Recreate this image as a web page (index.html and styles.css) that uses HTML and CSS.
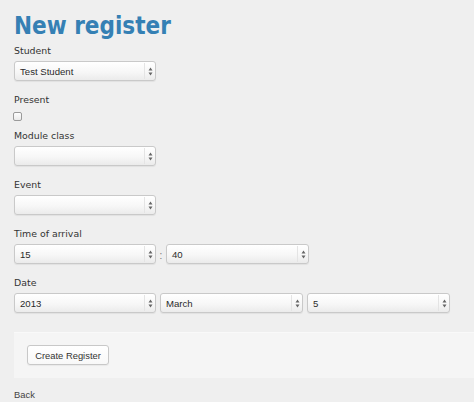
FILE: index.html
```html
<!DOCTYPE html>
<html lang="en">
<head>
<meta charset="utf-8">
<title>New register</title>
<link rel="stylesheet" href="styles.css">
</head>
<body>
<h1 class="title">New register</h1>
<form class="form">
  <div class="field">
    <label class="label">Student</label>
    <div class="select"><span class="select-text">Test Student</span><span class="select-arrow"><svg width="5" height="9" viewBox="0 0 5 9"><path d="M2.5 0.5 L4.5 3.5 L0.5 3.5 Z M2.5 8.5 L4.5 5.5 L0.5 5.5 Z" fill="#666"/></svg></span></div>
  </div>
  <div class="field field-check">
    <label class="label">Present</label>
    <span class="checkbox"></span>
  </div>
  <div class="field">
    <label class="label">Module class</label>
    <div class="select"><span class="select-text"></span><span class="select-arrow"><svg width="5" height="9" viewBox="0 0 5 9"><path d="M2.5 0.5 L4.5 3.5 L0.5 3.5 Z M2.5 8.5 L4.5 5.5 L0.5 5.5 Z" fill="#666"/></svg></span></div>
  </div>
  <div class="field">
    <label class="label">Event</label>
    <div class="select"><span class="select-text"></span><span class="select-arrow"><svg width="5" height="9" viewBox="0 0 5 9"><path d="M2.5 0.5 L4.5 3.5 L0.5 3.5 Z M2.5 8.5 L4.5 5.5 L0.5 5.5 Z" fill="#666"/></svg></span></div>
  </div>
  <div class="field">
    <label class="label">Time of arrival</label>
    <div class="row row-time">
      <div class="select"><span class="select-text">15</span><span class="select-arrow"><svg width="5" height="9" viewBox="0 0 5 9"><path d="M2.5 0.5 L4.5 3.5 L0.5 3.5 Z M2.5 8.5 L4.5 5.5 L0.5 5.5 Z" fill="#666"/></svg></span></div>
      <span class="colon">:</span>
      <div class="select select-wide"><span class="select-text">40</span><span class="select-arrow"><svg width="5" height="9" viewBox="0 0 5 9"><path d="M2.5 0.5 L4.5 3.5 L0.5 3.5 Z M2.5 8.5 L4.5 5.5 L0.5 5.5 Z" fill="#666"/></svg></span></div>
    </div>
  </div>
  <div class="field">
    <label class="label">Date</label>
    <div class="row row-date">
      <div class="select"><span class="select-text">2013</span><span class="select-arrow"><svg width="5" height="9" viewBox="0 0 5 9"><path d="M2.5 0.5 L4.5 3.5 L0.5 3.5 Z M2.5 8.5 L4.5 5.5 L0.5 5.5 Z" fill="#666"/></svg></span></div>
      <div class="select select-wide"><span class="select-text">March</span><span class="select-arrow"><svg width="5" height="9" viewBox="0 0 5 9"><path d="M2.5 0.5 L4.5 3.5 L0.5 3.5 Z M2.5 8.5 L4.5 5.5 L0.5 5.5 Z" fill="#666"/></svg></span></div>
      <div class="select select-wide"><span class="select-text">5</span><span class="select-arrow"><svg width="5" height="9" viewBox="0 0 5 9"><path d="M2.5 0.5 L4.5 3.5 L0.5 3.5 Z M2.5 8.5 L4.5 5.5 L0.5 5.5 Z" fill="#666"/></svg></span></div>
    </div>
  </div>
  <div class="form-actions">
    <button type="button" class="button">Create Register</button>
  </div>
</form>
<a class="back" href="#">Back</a>
</body>
</html>
```

FILE: styles.css
```css
html, body {
  margin: 0;
  padding: 0;
}
body {
  background: #efefef;
  padding: 0 14px;
  overflow: hidden;
  font-family: "Liberation Sans", Arial, sans-serif;
  color: #333;
}
.title {
  margin: 0;
  padding-top: 11px;
  height: 33px;
  font-family: "DejaVu Sans Condensed", "DejaVu Sans", sans-serif;
  font-stretch: semi-condensed;
  font-weight: bold;
  font-size: 24px;
  line-height: 30px;
  color: #3580b4;
}
.form {
  margin: 0;
}
.field {
  margin-bottom: 12px;
}
.field-check {
  margin-bottom: 8px;
}
.label {
  display: block;
  font-family: "DejaVu Sans", Verdana, sans-serif;
  font-size: 9.4px;
  line-height: 14px;
  margin-bottom: 3px;
  color: #333;
}
.field-check .label {
  margin-bottom: 5px;
}
.checkbox {
  display: block;
  margin-left: -1px;
  width: 9px;
  height: 9px;
  box-sizing: border-box;
  border: 1px solid #9a9a9a;
  border-radius: 2px;
  background: linear-gradient(#fdfdfd, #eaeaea);
}
.select {
  display: flex;
  align-items: center;
  width: 142px;
  height: 20px;
  box-sizing: border-box;
  border: 1px solid #c9c9c9;
  border-radius: 3px;
  background: linear-gradient(#ffffff, #f7f7f7 55%, #ebebeb);
  box-shadow: 0 1px 1px rgba(0, 0, 0, 0.06);
}
.select-wide {
  width: 143px;
}
.select-text {
  flex: 1;
  padding-left: 5px;
  font-family: "Liberation Sans", Arial, sans-serif;
  font-size: 9.6px;
  color: #2a2a2a;
  white-space: nowrap;
}
.select-arrow {
  display: flex;
  align-items: center;
  justify-content: center;
  width: 10px;
  height: 16px;
  border-left: 1px solid #e4e4e4;
}
.row {
  display: flex;
  align-items: center;
}
.row-date {
  gap: 4px;
}
.colon {
  width: 10px;
  text-align: center;
  font-family: "Liberation Sans", Arial, sans-serif;
  font-size: 10px;
  color: #777;
  padding-top: 3px;
}
.form-actions {
  margin-top: 19px;
  margin-right: -14px;
  padding: 12px 13px 13px;
  background: #f5f5f5;
  border-top: 1px solid #f9f9f9;
}
.button {
  display: block;
  width: 82px;
  height: 20px;
  padding: 0;
  box-sizing: border-box;
  border: 1px solid #c8c8c8;
  border-radius: 3px;
  background: linear-gradient(#ffffff, #f8f8f8);
  box-shadow: 0 1px 1px rgba(0, 0, 0, 0.05);
  font-family: "Liberation Sans", Arial, sans-serif;
  font-size: 9.4px;
  color: #333;
}
.back {
  display: block;
  margin-top: 10px;
  font-family: "Liberation Sans", Arial, sans-serif;
  font-size: 9.4px;
  line-height: 14px;
  color: #444;
  text-decoration: none;
}
```
